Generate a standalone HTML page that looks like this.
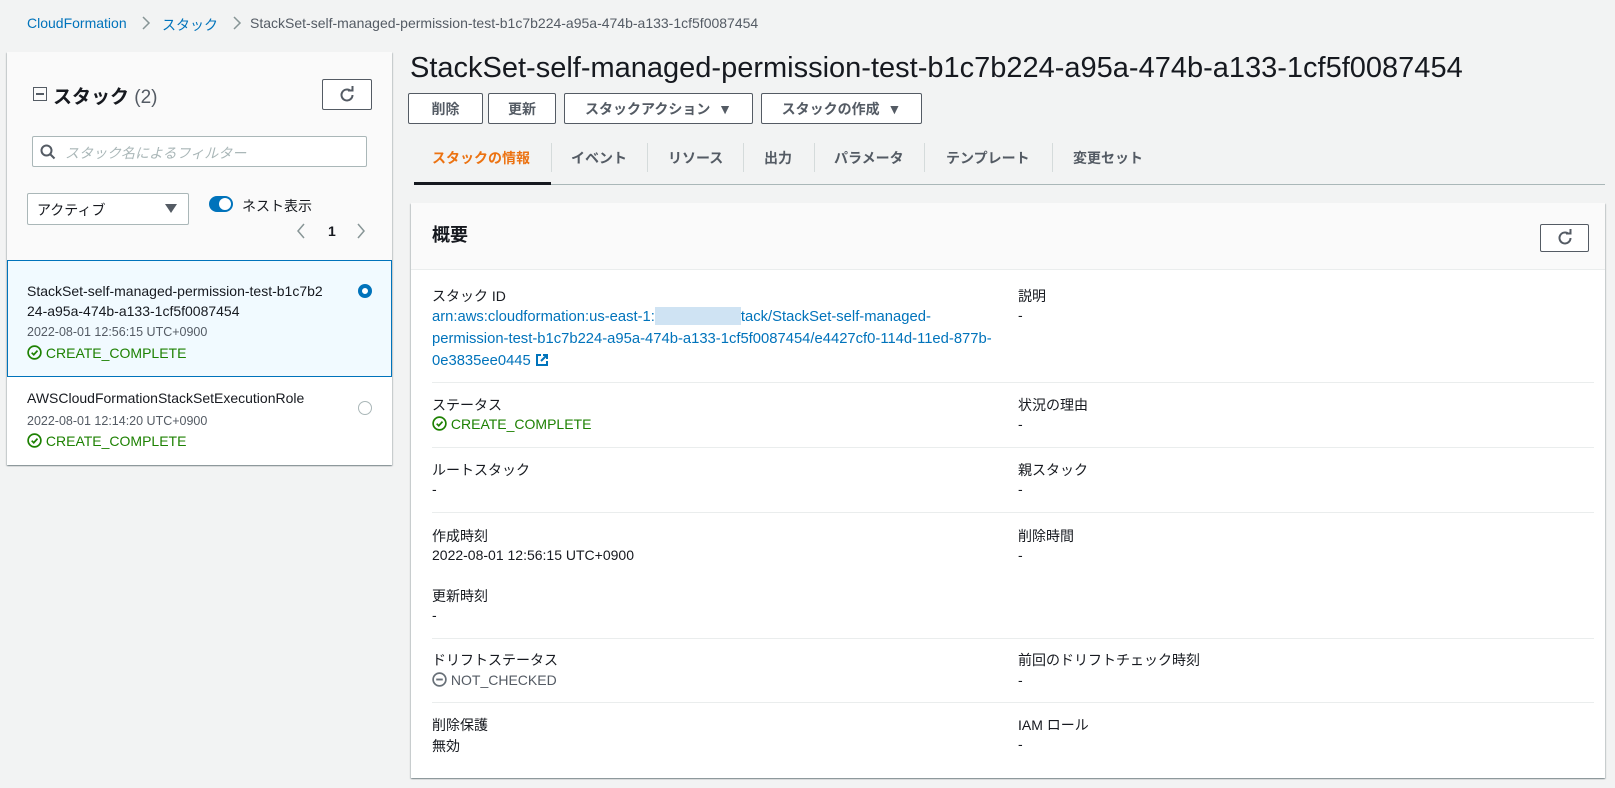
<!DOCTYPE html>
<html><head><meta charset="utf-8"><style>
*{box-sizing:border-box;margin:0;padding:0}
body{width:1615px;height:788px;background:#f2f3f3;font-family:"Liberation Sans","Noto Sans CJK JP",sans-serif;font-size:14px;color:#16191f;position:relative;overflow:hidden}
.a{position:absolute;white-space:nowrap}
.link{color:#0073bb}
.grey{color:#545b64}
.green{color:#1d8102}
.btn{position:absolute;border:1px solid #545b64;background:#fff;border-radius:2px;font-weight:bold;color:#545b64;font-size:14px;display:flex;align-items:center;justify-content:center}
.panel{position:absolute;background:#fff;box-shadow:0 1px 1px 0 rgba(0,28,36,.3),1px 1px 1px 0 rgba(0,28,36,.15),-1px 1px 1px 0 rgba(0,28,36,.15)}
.hr{position:absolute;height:1px;background:#eaeded;left:432px;width:1162px}
</style></head><body>
<div class="a link" style="left:27px;top:15px;font-size:14px">CloudFormation</div>
<svg class="a" style="left:141px;top:16px" width="10" height="14" viewBox="0 0 10 14"><path d="M2 1l6 6-6 6" fill="none" stroke="#879596" stroke-width="1.5"/></svg>
<div class="a link" style="left:162px;top:15px;font-size:14px">スタック</div>
<svg class="a" style="left:232px;top:16px" width="10" height="14" viewBox="0 0 10 14"><path d="M2 1l6 6-6 6" fill="none" stroke="#879596" stroke-width="1.5"/></svg>
<div class="a grey" style="left:250px;top:15px;font-size:14px">StackSet-self-managed-permission-test-b1c7b224-a95a-474b-a133-1cf5f0087454</div>

<div class="panel" style="left:7px;top:52px;width:385px;height:413px;background:#fafafa"></div>
<div class="a" style="left:33px;top:87px;width:14px;height:14px;border:1.5px solid #545b64"></div>
<div class="a" style="left:36px;top:93px;width:8px;height:2px;background:#545b64"></div>
<div class="a" style="left:53px;top:82px;font-size:19px;font-weight:bold">スタック <span style="font-weight:normal;color:#545b64">(2)</span></div>
<div class="btn" style="left:322px;top:79px;width:50px;height:31px"><svg width="18" height="18" viewBox="0 0 18 18"><path d="M14.5 9a5.5 5.5 0 1 1-1.8-4.1" fill="none" stroke="#545b64" stroke-width="2"/><path d="M10 4.5h4.5V0" fill="none" stroke="#545b64" stroke-width="2"/></svg></div>
<div class="a" style="left:32px;top:136px;width:335px;height:31px;border:1px solid #aab7b8;background:#fff;border-radius:2px"></div>
<svg class="a" style="left:40px;top:144px" width="16" height="16" viewBox="0 0 16 16"><circle cx="6.5" cy="6.5" r="5" fill="none" stroke="#545b64" stroke-width="2"/><path d="M10 10l4.5 4.5" stroke="#545b64" stroke-width="2"/></svg>
<div class="a" style="left:65px;top:143px;color:#aab7b8;font-style:italic">スタック名によるフィルター</div>
<div class="a" style="left:27px;top:193px;width:162px;height:32px;border:1px solid #aab7b8;background:#fff;border-radius:2px"></div>
<div class="a" style="left:37px;top:200px">アクティブ</div>
<div class="a" style="left:165px;top:204px;width:0;height:0;border-left:6px solid transparent;border-right:6px solid transparent;border-top:9px solid #545b64"></div>
<div class="a" style="left:209px;top:196px;width:24px;height:16px;border-radius:8px;background:#0073bb"></div>
<div class="a" style="left:219px;top:198px;width:12px;height:12px;border-radius:6px;background:#fff"></div>
<div class="a" style="left:242px;top:196px">ネスト表示</div>
<svg class="a" style="left:296px;top:223px" width="10" height="16" viewBox="0 0 10 16"><path d="M8 1L2 8l6 7" fill="none" stroke="#879596" stroke-width="1.5"/></svg>
<div class="a" style="left:328px;top:223px;font-weight:bold">1</div>
<svg class="a" style="left:356px;top:223px" width="10" height="16" viewBox="0 0 10 16"><path d="M2 1l6 7-6 7" fill="none" stroke="#879596" stroke-width="1.5"/></svg>

<div class="a" style="left:7px;top:260px;width:385px;height:117px;border:1px solid #0073bb;background:#f1faff"></div>
<div class="a" style="left:7px;top:377px;width:385px;height:88px;background:#fff"></div>
<div class="a" style="left:27px;top:281px;line-height:20px">StackSet-self-managed-permission-test-b1c7b2<br>24-a95a-474b-a133-1cf5f0087454</div>
<div class="a grey" style="left:27px;top:325px;font-size:12.5px">2022-08-01 12:56:15 UTC+0900</div>
<div class="a green" style="left:27px;top:345px"><svg width="15" height="15" viewBox="0 0 16 16" style="vertical-align:-2px"><circle cx="8" cy="8" r="6.8" fill="none" stroke="#1d8102" stroke-width="1.8"/><path d="M5 8.2l2.2 2.2L11.2 6" fill="none" stroke="#1d8102" stroke-width="1.8"/></svg> CREATE_COMPLETE</div>
<div class="a" style="left:358px;top:284px;width:14px;height:14px;border-radius:7px;border:4px solid #0073bb;background:#fff"></div>
<div class="a" style="left:27px;top:390px">AWSCloudFormationStackSetExecutionRole</div>
<div class="a grey" style="left:27px;top:414px;font-size:12.5px">2022-08-01 12:14:20 UTC+0900</div>
<div class="a green" style="left:27px;top:433px"><svg width="15" height="15" viewBox="0 0 16 16" style="vertical-align:-2px"><circle cx="8" cy="8" r="6.8" fill="none" stroke="#1d8102" stroke-width="1.8"/><path d="M5 8.2l2.2 2.2L11.2 6" fill="none" stroke="#1d8102" stroke-width="1.8"/></svg> CREATE_COMPLETE</div>
<div class="a" style="left:358px;top:401px;width:14px;height:14px;border-radius:7px;border:1px solid #aab7b8;background:#fff"></div>

<div class="a" style="left:410px;top:52px;font-size:29px">StackSet-self-managed-permission-test-b1c7b224-a95a-474b-a133-1cf5f0087454</div>
<div class="btn" style="left:408px;top:93px;width:75px;height:31px">削除</div>
<div class="btn" style="left:488px;top:93px;width:68px;height:31px">更新</div>
<div class="btn" style="left:564px;top:93px;width:189px;height:31px">スタックアクション&nbsp;&nbsp;▼</div>
<div class="btn" style="left:761px;top:93px;width:161px;height:31px">スタックの作成&nbsp;&nbsp;▼</div>

<div class="a" style="left:414px;top:184px;width:1191px;height:1px;background:#aab7b8"></div>
<div class="a" style="left:414px;top:182px;width:137px;height:3px;background:#16191f"></div>
<div class="a" style="left:432px;top:148px;font-weight:bold;color:#ec7211">スタックの情報</div>
<div class="a" style="left:571px;top:148px;font-weight:bold;color:#545b64">イベント</div>
<div class="a" style="left:668px;top:148px;font-weight:bold;color:#545b64">リソース</div>
<div class="a" style="left:764px;top:148px;font-weight:bold;color:#545b64">出力</div>
<div class="a" style="left:834px;top:148px;font-weight:bold;color:#545b64">パラメータ</div>
<div class="a" style="left:946px;top:148px;font-weight:bold;color:#545b64">テンプレート</div>
<div class="a" style="left:1073px;top:148px;font-weight:bold;color:#545b64">変更セット</div>
<div class="a" style="left:551px;top:143px;width:1px;height:29px;background:#d5dbdb"></div>
<div class="a" style="left:647px;top:143px;width:1px;height:29px;background:#d5dbdb"></div>
<div class="a" style="left:743px;top:143px;width:1px;height:29px;background:#d5dbdb"></div>
<div class="a" style="left:814px;top:143px;width:1px;height:29px;background:#d5dbdb"></div>
<div class="a" style="left:924px;top:143px;width:1px;height:29px;background:#d5dbdb"></div>
<div class="a" style="left:1052px;top:143px;width:1px;height:29px;background:#d5dbdb"></div>

<div class="panel" style="left:411px;top:203px;width:1194px;height:575px"></div>
<div class="a" style="left:411px;top:203px;width:1194px;height:67px;background:#fafafa;border-bottom:1px solid #eaeded"></div>
<div class="a" style="left:432px;top:221px;font-size:18px;font-weight:bold">概要</div>
<div class="btn" style="left:1540px;top:224px;width:49px;height:28px"><svg width="18" height="18" viewBox="0 0 18 18"><path d="M14.5 9a5.5 5.5 0 1 1-1.8-4.1" fill="none" stroke="#545b64" stroke-width="2"/><path d="M10 4.5h4.5V0" fill="none" stroke="#545b64" stroke-width="2"/></svg></div>

<div class="a" style="left:432px;top:286px">スタック ID</div>
<div class="a link" style="left:432px;top:306px;line-height:22px;font-size:14.8px">arn:aws:cloudformation:us-east-1:<span style="display:inline-block;width:86px;height:18px;background:#cfe3f3;vertical-align:-4px"></span>tack/StackSet-self-managed-<br>permission-test-b1c7b224-a95a-474b-a133-1cf5f0087454/e4427cf0-114d-11ed-877b-<br>0e3835ee0445 <svg width="14" height="14" viewBox="0 0 14 14" style="vertical-align:-2px"><path d="M6 2H2v10h10V8M8 2h4v4M12 2L6 8" fill="none" stroke="#0073bb" stroke-width="2"/></svg></div>
<div class="a" style="left:1018px;top:286px">説明</div>
<div class="a" style="left:1018px;top:307px">-</div>
<div class="hr" style="top:382px"></div>
<div class="a" style="left:432px;top:395px">ステータス</div>
<div class="a green" style="left:432px;top:416px"><svg width="15" height="15" viewBox="0 0 16 16" style="vertical-align:-2px"><circle cx="8" cy="8" r="6.8" fill="none" stroke="#1d8102" stroke-width="1.8"/><path d="M5 8.2l2.2 2.2L11.2 6" fill="none" stroke="#1d8102" stroke-width="1.8"/></svg> CREATE_COMPLETE</div>
<div class="a" style="left:1018px;top:395px">状況の理由</div>
<div class="a" style="left:1018px;top:416px">-</div>
<div class="hr" style="top:447px"></div>
<div class="a" style="left:432px;top:460px">ルートスタック</div>
<div class="a" style="left:432px;top:481px">-</div>
<div class="a" style="left:1018px;top:460px">親スタック</div>
<div class="a" style="left:1018px;top:481px">-</div>
<div class="hr" style="top:512px"></div>
<div class="a" style="left:432px;top:526px">作成時刻</div>
<div class="a" style="left:432px;top:547px">2022-08-01 12:56:15 UTC+0900</div>
<div class="a" style="left:1018px;top:526px">削除時間</div>
<div class="a" style="left:1018px;top:547px">-</div>
<div class="a" style="left:432px;top:586px">更新時刻</div>
<div class="a" style="left:432px;top:607px">-</div>
<div class="hr" style="top:638px"></div>
<div class="a" style="left:432px;top:650px">ドリフトステータス</div>
<div class="a grey" style="left:432px;top:672px"><svg width="15" height="15" viewBox="0 0 16 16" style="vertical-align:-2px"><circle cx="8" cy="8" r="6.8" fill="none" stroke="#687078" stroke-width="1.8"/><path d="M4.5 8h7" stroke="#687078" stroke-width="2"/></svg> NOT_CHECKED</div>
<div class="a" style="left:1018px;top:650px">前回のドリフトチェック時刻</div>
<div class="a" style="left:1018px;top:672px">-</div>
<div class="hr" style="top:702px"></div>
<div class="a" style="left:432px;top:715px">削除保護</div>
<div class="a" style="left:432px;top:736px">無効</div>
<div class="a" style="left:1018px;top:715px">IAM ロール</div>
<div class="a" style="left:1018px;top:736px">-</div>
</body></html>
